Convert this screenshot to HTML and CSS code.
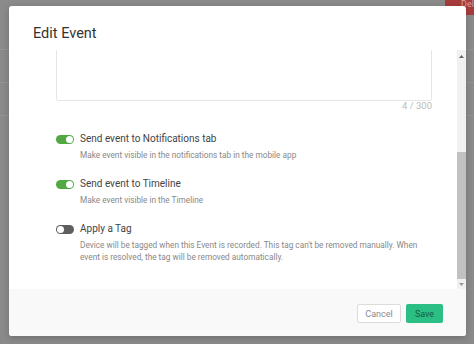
FILE: index.html
```html
<!DOCTYPE html>
<html>
	<head>
		<meta charset="UTF-8">
		<title>Edit Event</title>
		<link rel="stylesheet" href="styles.css">
	</head>
	<body>
		<div class="page">
			<div class="topbar">
				<span class="btn-danger">Delete</span>
			</div>
			<div class="page-row"></div>
			<div class="page-row"></div>
		</div>

		<div class="modal">
			<div class="modal-header">Edit Event</div>

			<div class="modal-body">
				<div class="scroll-area">
					<div class="form">
						<textarea class="textarea"></textarea>
						<div class="counter">4 / 300</div>

						<div class="option">
							<span class="switch on"></span>
							<div class="option-text">
								<div class="option-title">Send event to Notifications tab</div>
								<div class="option-desc">Make event visible in the notifications tab in the mobile app</div>
							</div>
						</div>

						<div class="option">
							<span class="switch on"></span>
							<div class="option-text">
								<div class="option-title">Send event to Timeline</div>
								<div class="option-desc">Make event visible in the Timeline</div>
							</div>
						</div>

						<div class="option">
							<span class="switch"></span>
							<div class="option-text">
								<div class="option-title">Apply a Tag</div>
								<div class="option-desc">Device will be tagged when this Event is recorded. This tag can't be removed manually. When event is resolved, the tag will be removed automatically.</div>
							</div>
						</div>
					</div>
				</div>

				<div class="scrollbar">
					<div class="scroll-btn">
						<svg width="5" height="3" viewBox="0 0 5 3"><path d="M0 3L2.5 0L5 3z" fill="#666"/></svg>
					</div>
					<div class="scroll-track">
						<div class="scroll-thumb"></div>
					</div>
					<div class="scroll-btn down">
						<svg width="5" height="3" viewBox="0 0 5 3"><path d="M0 0L2.5 3L5 0z" fill="#999"/></svg>
					</div>
				</div>
			</div>

			<div class="modal-footer">
				<button class="btn btn-cancel">Cancel</button>
				<button class="btn btn-save">Save</button>
			</div>
		</div>
	</body>
</html>
```

FILE: styles.css
```css
* {
	box-sizing: border-box;
}

body {
	margin: 0;
	width: 474px;
	height: 344px;
	overflow: hidden;
	background-color: #8a8a8a;
	font-family: Roboto, "Liberation Sans", sans-serif;
}

/* page behind the dialog */
.topbar {
	display: flex;
	justify-content: flex-end;
	height: 50px;
	border-bottom: 1px solid #949494;
}
.btn-danger {
	width: 29px;
	height: 15px;
	overflow: hidden;
	padding-left: 16px;
	background-color: #a63b3b;
	color: #d9a0a0;
	font-size: 9px;
	line-height: 9px;
	white-space: nowrap;
}
.page-row {
	height: 33px;
	border-bottom: 1px solid #949494;
}

/* dialog */
.modal {
	position: absolute;
	top: 6px;
	left: 9px;
	width: 457px;
	height: 330px;
	display: flex;
	flex-direction: column;
	background-color: #fff;
	border-radius: 3px;
	overflow: hidden;
	box-shadow: 0 2px 6px rgba(0, 0, 0, 0.2);
}

.modal-header {
	height: 44px;
	flex-shrink: 0;
	padding: 18px 24px 0;
	font-size: 14.5px;
	line-height: 20px;
	color: #333;
}

.modal-body {
	flex: 1;
	display: flex;
	min-height: 0;
}

/* column-reverse keeps the content pinned to the bottom (scrolled down) */
.scroll-area {
	flex: 1;
	display: flex;
	flex-direction: column-reverse;
	overflow: hidden;
}

.scrollbar {
	width: 9px;
	flex-shrink: 0;
	display: flex;
	flex-direction: column;
	background-color: #f1f1f1;
}
.scroll-btn {
	height: 12px;
	display: flex;
	align-items: center;
	justify-content: center;
}
.scroll-btn.down {
	height: 10px;
}
.scroll-track {
	flex: 1;
	display: flex;
	flex-direction: column;
	justify-content: flex-end;
}
.scroll-thumb {
	height: 127px;
	background-color: #c1c1c1;
}

.form {
	flex-shrink: 0;
	padding: 24px 25px 26px 47px;
}

.textarea {
	display: block;
	width: 100%;
	height: 90px;
	border: 1px solid #e6e6e6;
	border-radius: 2px;
	padding: 6px 8px;
	resize: none;
	font-family: inherit;
	font-size: 10.5px;
	color: #444;
}
.counter {
	text-align: right;
	font-size: 9.5px;
	line-height: 10px;
	color: #bbb;
	margin-bottom: 21px;
}

.option {
	display: flex;
	align-items: flex-start;
	gap: 6px;
	margin-bottom: 16px;
}
.option:last-child {
	margin-bottom: 0;
}
.switch {
	position: relative;
	flex-shrink: 0;
	width: 18px;
	height: 9px;
	margin-top: 3px;
	border-radius: 5px;
	background-color: #5e5e5e;
}
.switch::after {
	content: "";
	position: absolute;
	top: 1px;
	left: 1px;
	width: 7px;
	height: 7px;
	border-radius: 50%;
	background-color: #fff;
}
.switch.on {
	background-color: #52a843;
}
.switch.on::after {
	left: 10px;
}
.option-title {
	font-size: 10px;
	line-height: 14px;
	color: #444;
}
.option-desc {
	margin-top: 3px;
	font-size: 8.25px;
	line-height: 12px;
	color: #888;
}

.modal-footer {
	height: 47px;
	flex-shrink: 0;
	display: flex;
	justify-content: flex-end;
	align-items: flex-start;
	gap: 5px;
	padding: 15px 23px 0 0;
	background-color: #f9f9f9;
}
.btn {
	height: 19px;
	border-radius: 2px;
	font-family: inherit;
	font-size: 9px;
	padding: 0;
	cursor: pointer;
}
.btn-cancel {
	width: 44px;
	background-color: #fff;
	border: 1px solid #dcdcdc;
	color: #8a8a8a;
}
.btn-save {
	width: 37px;
	background-color: #2bbf86;
	border: none;
	color: #16603f;
}
```
